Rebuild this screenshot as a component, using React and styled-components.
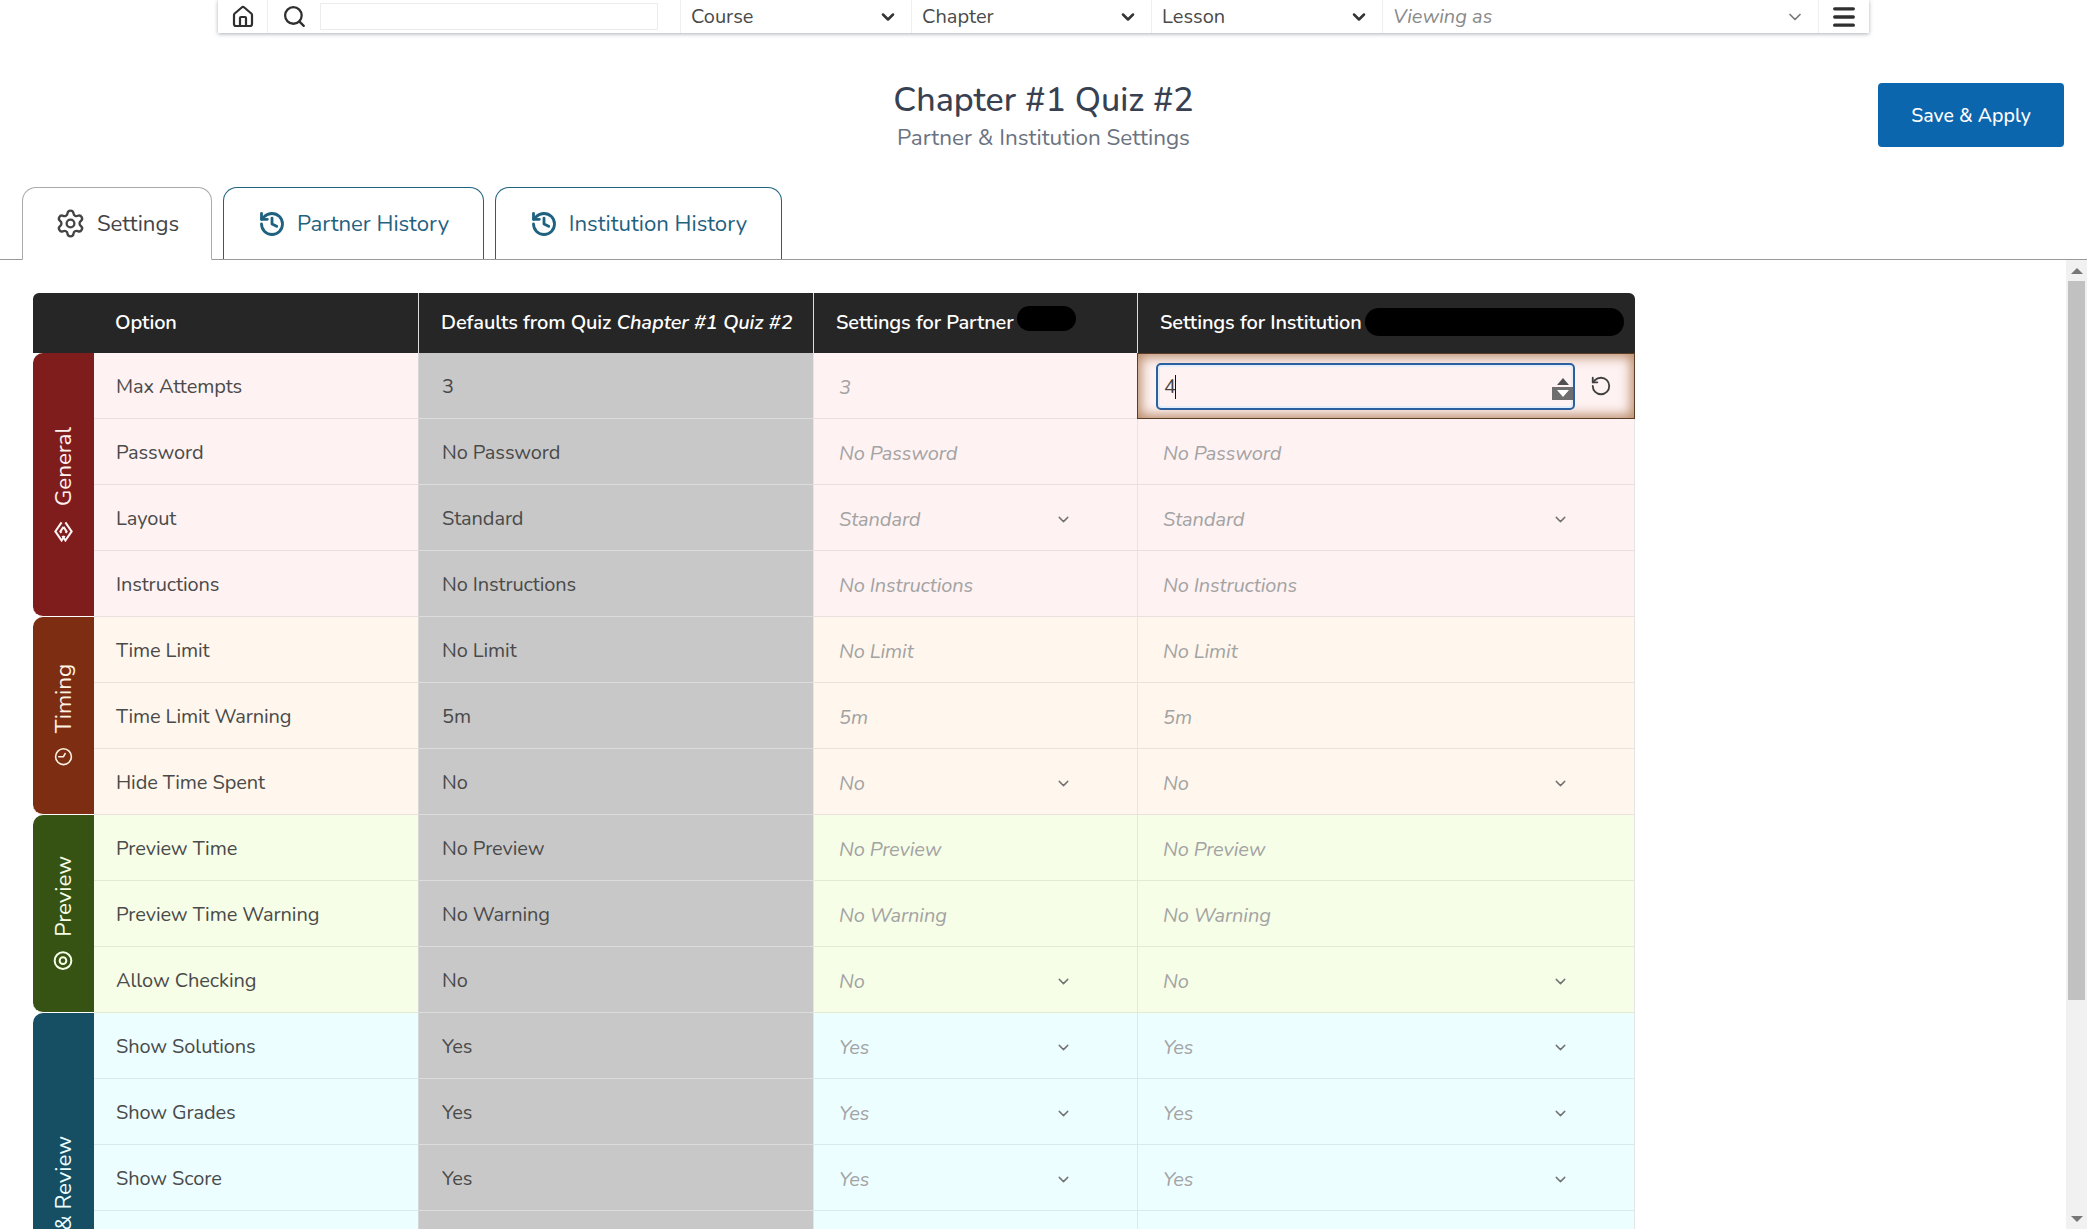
import styled, { createGlobalStyle } from "styled-components";
import {
  ChevronDown,
  Clock,
  History,
  House,
  Menu,
  RotateCcw,
  Search,
  Settings,
  ClipboardCheck,
} from "lucide-react";

const GeneralIcon = () => (
  <svg width="23" height="23" viewBox="0 0 24 24" fill="none" stroke="currentColor" strokeWidth="2.2" strokeLinejoin="miter">
    <g transform="rotate(90 12 12)">
      <path d="M10 2.500 3.500 12l6.500 9.500 3.200-4.700" />
      <path d="M14 2.500 20.500 12 14 21.500 10.800 16.800" />
      <path d="M12 7.200 8.800 12l1 1.500M12 7.200 15.200 12l-1 1.500" />
    </g>
  </svg>
);

const RingIcon = () => (
  <svg width="20" height="20" viewBox="0 0 24 24" fill="none" stroke="currentColor" strokeWidth="2.400">
    <circle cx="12" cy="12" r="10" />
    <circle cx="12" cy="12" r="4" />
  </svg>
);

const sections = [
  {
    name: "General",
    side: "#7f1d1d",
    ink: "#fff1f1",
    bg: "#fef2f2",
    icon: <GeneralIcon />,
    rows: [
      { label: "Max Attempts", def: "3", partner: "3", inst: "4", active: true },
      { label: "Password", def: "No Password", partner: "No Password", inst: "No Password" },
      { label: "Layout", def: "Standard", partner: "Standard", inst: "Standard", select: true },
      { label: "Instructions", def: "No Instructions", partner: "No Instructions", inst: "No Instructions" },
    ],
  },
  {
    name: "Timing",
    side: "#7c2d12",
    ink: "#fff3e4",
    bg: "#fff7ed",
    icon: <Clock size={19} />,
    rows: [
      { label: "Time Limit", def: "No Limit", partner: "No Limit", inst: "No Limit" },
      { label: "Time Limit Warning", def: "5m", partner: "5m", inst: "5m" },
      { label: "Hide Time Spent", def: "No", partner: "No", inst: "No", select: true },
    ],
  },
  {
    name: "Preview",
    side: "#365314",
    ink: "#f7fee7",
    bg: "#f7fee7",
    icon: <RingIcon />,
    rows: [
      { label: "Preview Time", def: "No Preview", partner: "No Preview", inst: "No Preview" },
      { label: "Preview Time Warning", def: "No Warning", partner: "No Warning", inst: "No Warning" },
      { label: "Allow Checking", def: "No", partner: "No", inst: "No", select: true },
    ],
  },
  {
    name: "Grades & Review",
    side: "#164e63",
    ink: "#ecfeff",
    bg: "#ecfeff",
    icon: <ClipboardCheck size={29} />,
    rows: [
      { label: "Show Solutions", def: "Yes", partner: "Yes", inst: "Yes", select: true },
      { label: "Show Grades", def: "Yes", partner: "Yes", inst: "Yes", select: true },
      { label: "Show Score", def: "Yes", partner: "Yes", inst: "Yes", select: true },
      { label: "Show Answers", def: "Yes", partner: "Yes", inst: "Yes", select: true },
      { label: "Show Points", def: "Yes", partner: "Yes", inst: "Yes", select: true },
      { label: "Show Questions", def: "Yes", partner: "Yes", inst: "Yes", select: true },
      { label: "Show Feedback", def: "Yes", partner: "Yes", inst: "Yes", select: true },
    ],
  },
];

function Control({ value, select, active }) {
  if (active) {
    return (
      <ControlRow>
        <NumberWrap>
          <NumberInput type="number" defaultValue={value} />
          <Caret />
          <Spinner>
            <SpinUp />
            <SpinDown />
          </Spinner>
        </NumberWrap>
        <ResetSlot>
          <RotateCcw size={22} strokeWidth={2} />
        </ResetSlot>
      </ControlRow>
    );
  }
  return (
    <ControlRow>
      {select ? (
        <SelectBox>
          {value}
          <ChevronDown size={17} strokeWidth={2} />
        </SelectBox>
      ) : (
        <PlainInput placeholder={value} />
      )}
      <ResetSlot />
    </ControlRow>
  );
}

export default function App() {
  return (
    <Page>
      <GlobalStyle />
      <NavWrap>
        <TopNav>
          <NavIcon $w={50}>
            <House size={24} strokeWidth={2.2} />
          </NavIcon>
          <SearchCell>
            <Search size={25} strokeWidth={2.2} />
            <SearchInput />
          </SearchCell>
          <NavSelect $w={231}>
            Course
            <ChevronDown size={20} strokeWidth={3} />
          </NavSelect>
          <NavSelect $w={240}>
            Chapter
            <ChevronDown size={20} strokeWidth={3} />
          </NavSelect>
          <NavSelect $w={231}>
            Lesson
            <ChevronDown size={20} strokeWidth={3} />
          </NavSelect>
          <NavSelect $w={436} $muted>
            Viewing as
            <ChevronDown size={20} strokeWidth={2} />
          </NavSelect>
          <NavIcon $w={50}>
            <Menu size={28} strokeWidth={2.8} />
          </NavIcon>
        </TopNav>
      </NavWrap>

      <TitleRow>
        <span />
        <TitleBlock>
          <Title>Chapter #1 Quiz #2</Title>
          <Subtitle>Partner &amp; Institution Settings</Subtitle>
        </TitleBlock>
        <SaveButton>Save &amp; Apply</SaveButton>
      </TitleRow>

      <TabBar>
        <Tab $active $w={190}>
          <Settings size={31} strokeWidth={1.8} />
          Settings
        </Tab>
        <Tab $w={261}>
          <History size={28} strokeWidth={2.4} />
          Partner History
        </Tab>
        <Tab $w={287}>
          <History size={28} strokeWidth={2.4} />
          Institution History
        </Tab>
      </TabBar>

      <Body>
        <ScrollArea>
          <Table>
            <colgroup>
              <col style={{ width: 61 }} />
              <col style={{ width: 324 }} />
              <col style={{ width: 395 }} />
              <col style={{ width: 324 }} />
              <col style={{ width: 498 }} />
            </colgroup>
            <thead>
              <tr>
                <HeadCell colSpan={2} $first>
                  <OptionTitle>Option</OptionTitle>
                </HeadCell>
                <HeadCell>
                  Defaults from Quiz <em>Chapter #1 Quiz #2</em>
                </HeadCell>
                <HeadCell>
                  <HeadInner>
                    Settings for Partner
                    <Redact $w={59} $h={25} $up={7} />
                  </HeadInner>
                </HeadCell>
                <HeadCell $last>
                  <HeadInner>
                    Settings for Institution
                    <Redact $w={259} $h={28} $up={0} />
                  </HeadInner>
                </HeadCell>
              </tr>
            </thead>
            {sections.map((section) => (
              <tbody key={section.name}>
                {section.rows.map((row, i) => (
                  <tr key={row.label}>
                    {i === 0 && (
                      <SideCell rowSpan={section.rows.length} $bg={section.side} $ink={section.ink}>
                        <SideLabel>
                          <SideIcon>{section.icon}</SideIcon>
                          {section.name}
                        </SideLabel>
                      </SideCell>
                    )}
                    <LabelCell $bg={section.bg}>{row.label}</LabelCell>
                    <DefaultCell>{row.def}</DefaultCell>
                    <ValueCell $bg={section.bg}>
                      <Control value={row.partner} select={row.select} />
                    </ValueCell>
                    <ValueCell $bg={section.bg} $active={row.active} $right>
                      <Control value={row.inst} select={row.select} active={row.active} />
                    </ValueCell>
                  </tr>
                ))}
              </tbody>
            ))}
          </Table>
        </ScrollArea>
        <ScrollRail>
          <RailButton>
            <ArrowUp />
          </RailButton>
          <RailTrack>
            <RailThumb />
          </RailTrack>
          <RailButton>
            <ArrowDown />
          </RailButton>
        </ScrollRail>
      </Body>
    </Page>
  );
}

const GlobalStyle = createGlobalStyle`
  html, body {
    margin: 0;
    padding: 0;
    height: 100%;
    overflow: hidden;
    background: #fff;
  }
  body, input, button {
    font-family: "Nunito", "Lato", "Liberation Sans", sans-serif;
  }
  input[type="number"]::-webkit-inner-spin-button,
  input[type="number"]::-webkit-outer-spin-button {
    appearance: none;
    margin: 0;
  }
`;

const Page = styled.div`
  height: 100vh;
  display: flex;
  flex-direction: column;
  color: #4a4a4a;
`;

const NavWrap = styled.div`
  display: flex;
  justify-content: center;
`;

const TopNav = styled.nav`
  width: 1651px;
  height: 33px;
  display: flex;
  background: #fff;
  box-shadow: 0 1px 4px rgba(60, 80, 100, 0.45);
`;

const NavIcon = styled.div`
  width: ${(p) => p.$w}px;
  display: flex;
  align-items: center;
  justify-content: center;
  color: #2f2f2f;
  border-right: 1px solid #eee;
  box-sizing: border-box;

  &:last-child {
    border-right: 0;
  }
`;

const SearchCell = styled.div`
  width: 413px;
  display: flex;
  align-items: center;
  gap: 13px;
  padding: 0 22px 0 14px;
  box-sizing: border-box;
  color: #2f2f2f;
  border-right: 1px solid #eee;
`;

const SearchInput = styled.input`
  width: 340px;
  height: 27px;
  box-sizing: border-box;
  border: 1px solid #ececec;
  outline: 0;
`;

const NavSelect = styled.div`
  width: ${(p) => p.$w}px;
  display: flex;
  align-items: center;
  justify-content: space-between;
  padding: 0 13px 0 10px;
  box-sizing: border-box;
  border-right: 1px solid #eee;
  font-size: 20px;
  color: ${(p) => (p.$muted ? "#8a8a8a" : "#4a4a4a")};
  font-style: ${(p) => (p.$muted ? "italic" : "normal")};

  svg {
    color: ${(p) => (p.$muted ? "#777" : "#333")};
  }
`;

const TitleRow = styled.header`
  display: grid;
  grid-template-columns: 1fr auto 1fr;
  align-items: start;
  height: 154px;
  box-sizing: border-box;
  padding: 47px 23px 0;
`;

const TitleBlock = styled.div`
  text-align: center;
`;

const Title = styled.h1`
  margin: 0;
  font-size: 34px;
  line-height: 40px;
  font-weight: 500;
  color: #374151;
`;

const Subtitle = styled.div`
  font-size: 22.500px;
  line-height: 36px;
  color: #6b7280;
`;

const SaveButton = styled.button`
  justify-self: end;
  width: 186px;
  height: 64px;
  margin-top: 3px;
  border: 0;
  border-radius: 4px;
  background: #0b66ad;
  color: #fff;
  font-size: 19.500px;
  font-weight: 500;
`;

const TabBar = styled.div`
  display: flex;
  gap: 11px;
  height: 73px;
  padding-left: 22px;
  box-sizing: border-box;
  border-bottom: 1px solid #999;
`;

const Tab = styled.div`
  width: ${(p) => p.$w}px;
  height: ${(p) => (p.$active ? 73 : 72)}px;
  box-sizing: border-box;
  display: flex;
  align-items: center;
  justify-content: center;
  gap: 11px;
  border: 1px solid ${(p) => (p.$active ? "#aaa" : "#1f6280")};
  border-bottom: ${(p) => (p.$active ? "1px solid #fff" : "0")};
  border-radius: 14px 14px 0 0;
  background: #fff;
  font-size: 22.200px;
  color: ${(p) => (p.$active ? "#444" : "#1f6280")};
`;

const Body = styled.div`
  flex: 1;
  min-height: 0;
  display: flex;
`;

const ScrollArea = styled.div`
  flex: 1;
  min-width: 0;
  overflow: hidden;
  padding: 33px 0 0 33px;
`;

const ScrollRail = styled.div`
  width: 21px;
  flex: none;
  display: flex;
  flex-direction: column;
  background: #f1f1f1;
`;

const RailButton = styled.div`
  height: 21px;
  flex: none;
  display: flex;
  align-items: center;
  justify-content: center;
`;

const ArrowUp = styled.span`
  border: 6px solid transparent;
  border-top: 0;
  border-bottom: 6px solid #777;
`;

const ArrowDown = styled.span`
  border: 6px solid transparent;
  border-bottom: 0;
  border-top: 6px solid #777;
`;

const RailTrack = styled.div`
  flex: 1;
  padding: 0 2px;
`;

const RailThumb = styled.div`
  height: 719px;
  background: #c1c1c1;
`;

const Table = styled.table`
  width: 1602px;
  table-layout: fixed;
  border-collapse: separate;
  border-spacing: 0;
  font-size: 20px;
  letter-spacing: -0.100px;
`;

const HeadCell = styled.th`
  height: 60px;
  padding: 0 0 2px 22px;
  box-sizing: border-box;
  background: #262626;
  color: #fff;
  font-size: 20px;
  font-weight: 600;
  text-align: left;
  white-space: nowrap;
  border-left: ${(p) => (p.$first ? "0" : "1px solid #ddd")};
  border-radius: ${(p) => (p.$first ? "6px 0 0 0" : p.$last ? "0 6px 0 0" : "0")};

  em {
    font-style: italic;
  }
`;

const OptionTitle = styled.span`
  padding-left: 60px;
`;

const HeadInner = styled.div`
  display: flex;
  align-items: center;
`;

const Redact = styled.span`
  width: ${(p) => p.$w}px;
  height: ${(p) => p.$h}px;
  margin: 0 0 ${(p) => p.$up}px 3px;
  border-radius: 14px;
  background: #000;
`;

const SideCell = styled.td`
  padding: 0;
  text-align: center;
  vertical-align: middle;
  background: ${(p) => p.$bg};
  color: ${(p) => p.$ink};
  border-radius: 10px 0 0 10px;
  border-bottom: 1px solid #fff;
`;

const SideLabel = styled.div`
  display: inline-flex;
  vertical-align: middle;
  align-items: center;
  gap: 14px;
  writing-mode: vertical-rl;
  transform: rotate(180deg);
  font-size: 22.500px;
  white-space: nowrap;
`;

const SideIcon = styled.span`
  display: flex;
  transform: rotate(90deg);
`;

const BodyCell = styled.td`
  height: 66px;
  box-sizing: border-box;
  padding: 2px 0 0;
  border-bottom: 1px solid rgba(0, 0, 0, 0.08);
`;

const LabelCell = styled(BodyCell)`
  padding-left: 22px;
  background: ${(p) => p.$bg};
`;

const DefaultCell = styled(BodyCell)`
  padding-left: 23px;
  background: #c8c8c8;
  border-left: 1px solid #d6d6d6;
  border-bottom-color: #dcdcdc;
`;

const ValueCell = styled(BodyCell)`
  padding-left: 18px;
  padding-top: 4px;
  background: ${(p) => p.$bg};
  border-left: 1px solid #e5e5e5;
  border-right: ${(p) => (p.$right ? "1px solid #e5e5e5" : "0")};
  ${(p) =>
    p.$active &&
    `
    padding-top: 0;
    border: 1px solid #5a3d26;
    box-shadow: inset 0 0 12px 3px #b98a68;
  `}
`;

const ControlRow = styled.div`
  display: flex;
  align-items: center;
`;

const ResetSlot = styled.div`
  width: 59px;
  flex: none;
  display: flex;
  padding-left: 15px;
  box-sizing: border-box;
  color: #404040;
`;

const PlainInput = styled.input`
  flex: 1;
  min-width: 0;
  padding: 0 0 0 7px;
  border: 0;
  outline: 0;
  background: transparent;
  font-size: 20px;
  font-style: italic;
  letter-spacing: -0.100px;

  &::placeholder {
    color: #a3a3a3;
    opacity: 1;
  }
`;

const SelectBox = styled.div`
  flex: 1;
  min-width: 0;
  display: flex;
  align-items: center;
  justify-content: space-between;
  padding: 0 6px 0 7px;
  font-style: italic;
  color: #a3a3a3;

  svg {
    color: #737373;
  }
`;

const NumberWrap = styled.div`
  flex: 1;
  position: relative;
  height: 47px;
  box-sizing: border-box;
  border: 2px solid #2b5f9e;
  border-radius: 5px;
  box-shadow: inset 0 0 0 2px #e3eefa;
  background: #fef2f2;
`;

const NumberInput = styled.input`
  width: 100%;
  height: 100%;
  box-sizing: border-box;
  padding: 0 0 0 6px;
  border: 0;
  outline: 0;
  background: transparent;
  font-size: 20px;
  color: #404040;
  appearance: textfield;
`;

const Caret = styled.span`
  position: absolute;
  left: 17px;
  top: 10px;
  width: 1px;
  height: 24px;
  background: #111;
`;

const Spinner = styled.div`
  position: absolute;
  right: 0;
  top: 13px;
  width: 21px;
  height: 22px;
`;

const SpinUp = styled.div`
  height: 9px;
  display: flex;
  align-items: flex-start;
  justify-content: center;

  &::after {
    content: "";
    border: 6px solid transparent;
    border-top: 0;
    border-bottom: 7px solid #505050;
  }
`;

const SpinDown = styled.div`
  height: 13px;
  background: #6e6e6e;
  display: flex;
  align-items: flex-start;
  justify-content: center;
  padding-top: 3px;
  box-sizing: border-box;

  &::after {
    content: "";
    border: 6px solid transparent;
    border-bottom: 0;
    border-top: 7px solid #fff;
  }
`;
